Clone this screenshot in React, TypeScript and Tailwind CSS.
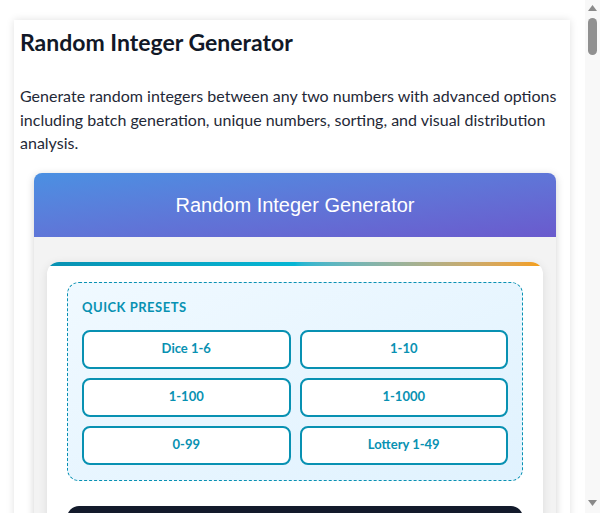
import React from 'react';

const presets = ['Dice 1-6', '1-10', '1-100', '1-1000', '0-99', 'Lottery 1-49'];

const PresetButton = ({ label }: { label: string }) => (
  <button className="h-[39px] rounded-lg border-2 border-[#0891b2] bg-white text-[13px] font-bold text-[#0891b2]">
    {label}
  </button>
);

// page scrollbar as it appears in the screenshot
const Scrollbar = () => (
  <div className="flex w-[15px] shrink-0 flex-col items-center bg-[#f8f8f8]">
    <svg width="9" height="6" viewBox="0 0 9 6" className="mt-[5px]">
      <path d="M0 6 L4.5 0 L9 6 Z" fill="#8a8a8a" />
    </svg>
    <div className="mt-[7px] h-[37px] w-[9px] rounded-full bg-[#909090]" />
    <div className="flex-1" />
    <svg width="9" height="6" viewBox="0 0 9 6" className="mb-[7px]">
      <path d="M0 0 L9 0 L4.5 6 Z" fill="#8a8a8a" />
    </svg>
  </div>
);

const App = () => {
  return (
    <div className="flex h-screen bg-white font-['Lato','Noto_Sans',sans-serif] text-[#1e293b]">
      <div className="min-w-0 flex-1 overflow-hidden">
        <div className="py-[20px]">
          <div className="ml-[14px] mr-[15px] bg-white px-[6px] pb-[40px] pt-[6px] shadow-[0_0_8px_rgba(0,0,0,0.12)]">
            <h1 className="text-[23px] font-bold leading-[32px] text-[#111827]">Random Integer Generator</h1>
            <p className="mt-[26px] text-[16px] leading-[23.5px] text-[#1f2937]">
              Generate random integers between any two numbers with advanced options including batch generation, unique
              numbers, sorting, and visual distribution analysis.
            </p>

            <div className="ml-[14px] mr-[8px] mt-[18px] overflow-hidden rounded-lg bg-[#f3f3f3] shadow-[0_2px_8px_rgba(0,0,0,0.18)]">
              <div className="flex h-[64px] items-center justify-center bg-gradient-to-br from-[#4a90e2] to-[#6a5acd]">
                <span className="font-['Liberation_Sans',Arial,sans-serif] text-[20px] text-white">
                  Random Integer Generator
                </span>
              </div>

              <div className="px-[13px] pb-[40px] pt-[25px]">
                <div className="overflow-hidden rounded-xl bg-white shadow-[0_2px_10px_rgba(0,0,0,0.1)]">
                  <div className="h-[4px] bg-gradient-to-r from-[#0891b2] via-[#06b6d4] to-[#f59e0b]" />
                  <div className="px-[20px] pb-[24px] pt-[16px]">
                    <div className="rounded-xl border border-dashed border-[#0891b2] bg-gradient-to-br from-[#f0f9ff] to-[#e0f2fe] px-[14px] py-[15px]">
                      <div className="mb-[14px] text-[13px] font-bold uppercase leading-[18px] tracking-[0.5px] text-[#0891b2]">
                        Quick Presets
                      </div>
                      <div className="grid grid-cols-2 gap-[9px]">
                        {presets.map((p) => (
                          <PresetButton key={p} label={p} />
                        ))}
                      </div>
                    </div>

                    <div className="mt-[25px] h-[180px] rounded-xl bg-[#131a2b]" />
                  </div>
                </div>
              </div>
            </div>
          </div>
        </div>
      </div>
      <Scrollbar />
    </div>
  );
};

export default App;
